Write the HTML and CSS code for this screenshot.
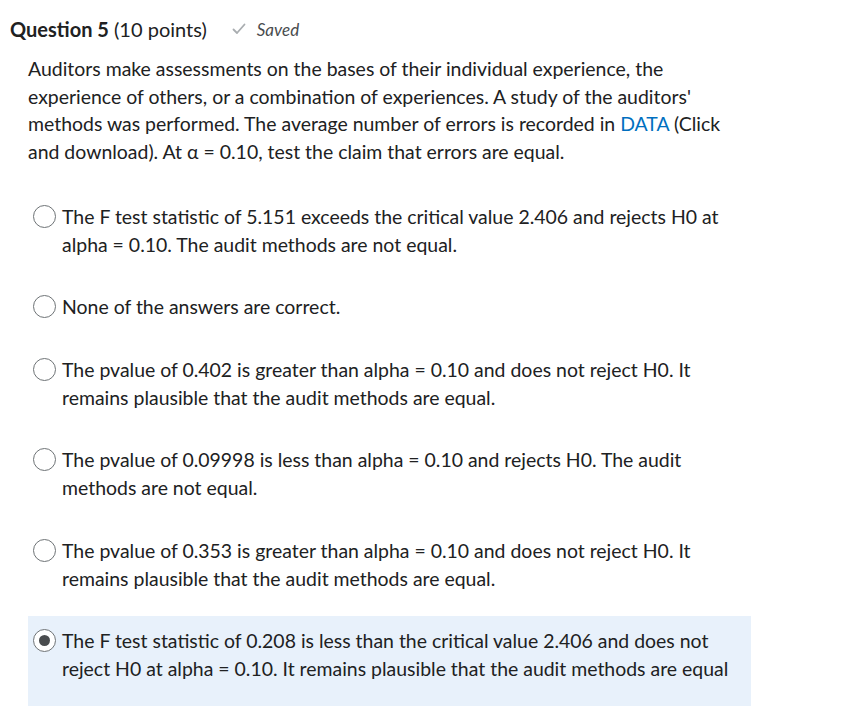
FILE: index.html
```html
<!DOCTYPE html>
<html lang="en">
<head>
    <meta charset="UTF-8">
    <meta name="viewport" content="width=device-width, initial-scale=1.0">
    <title>Question 5</title>
    <link rel="stylesheet" href="styles.css">
</head>
<body>
    <div class="question">
        <div class="question-header">
            <h2><strong>Question 5</strong> (10 points)</h2>
            <span class="saved">
                <svg width="16" height="16" viewBox="0 0 16 16" aria-hidden="true">
                    <path d="M2.5 8.5 L6 12 L13.5 3.5" fill="none" stroke="#a9adb0" stroke-width="1.8" stroke-linecap="round" stroke-linejoin="round"/>
                </svg>
                <em>Saved</em>
            </span>
        </div>

        <p class="prompt">Auditors make assessments on the bases of their individual experience, the experience of others, or a combination of experiences. A study of the auditors' methods was performed. The average number of errors is recorded in <a href="#">DATA</a> (Click and download). At &alpha; = 0.10, test the claim that errors are equal.</p>

        <div class="choices">
            <label class="choice">
                <input type="radio" name="q5">
                <span>The F test statistic of 5.151 exceeds the critical value 2.406 and rejects H0 at alpha = 0.10. The audit methods are not equal.</span>
            </label>
            <label class="choice">
                <input type="radio" name="q5">
                <span>None of the answers are correct.</span>
            </label>
            <label class="choice">
                <input type="radio" name="q5">
                <span>The pvalue of 0.402 is greater than alpha = 0.10 and does not reject H0. It remains plausible that the audit methods are equal.</span>
            </label>
            <label class="choice">
                <input type="radio" name="q5">
                <span>The pvalue of 0.09998 is less than alpha = 0.10 and rejects H0. The audit methods are not equal.</span>
            </label>
            <label class="choice">
                <input type="radio" name="q5">
                <span>The pvalue of 0.353 is greater than alpha = 0.10 and does not reject H0. It remains plausible that the audit methods are equal.</span>
            </label>
            <label class="choice selected">
                <input type="radio" name="q5" checked>
                <span>The F test statistic of 0.208 is less than the critical value 2.406 and does not reject H0 at alpha = 0.10. It remains plausible that the audit methods are equal</span>
            </label>
        </div>
    </div>
</body>
</html>
```

FILE: styles.css
```css
body {
    margin: 0;
    font-family: Lato, "Open Sans", sans-serif;
    color: #202122;
    background: #fff;
}

.question {
    padding: 14px 0 0 10px;
    width: 741px;
}

.question-header {
    display: flex;
    align-items: center;
    gap: 24px;
    height: 30px;
}

h2 {
    margin: 0;
    font-size: 20px;
    font-weight: normal;
}

h2 strong {
    font-weight: bold;
}

.saved {
    display: flex;
    align-items: center;
    gap: 10px;
    color: #494c4e;
    font-size: 17px;
}

.prompt {
    margin: 11px 0 0 18px;
    font-size: 19.45px;
    line-height: 27.7px;
}

.prompt a {
    color: #006fbf;
    text-decoration: none;
}

.choices {
    margin: 26px 0 0 18px;
}

.choice {
    display: flex;
    align-items: flex-start;
    padding: 11px 0 23.5px 5px;
    font-size: 19.45px;
    line-height: 28px;
    cursor: pointer;
}

.choice.selected {
    background-color: #e8f1fb;
    padding-top: 11px;
    padding-bottom: 23px;
}

.choice input {
    appearance: none;
    flex: none;
    width: 23px;
    height: 23px;
    margin: 2px 6px 0 0;
    border: 1px solid #6e7376;
    border-radius: 50%;
    background: #fff;
    position: relative;
}

.choice input:checked::after {
    content: "";
    position: absolute;
    top: 5px;
    left: 5px;
    width: 11px;
    height: 11px;
    border-radius: 50%;
    background: #494c4e;
}
```
